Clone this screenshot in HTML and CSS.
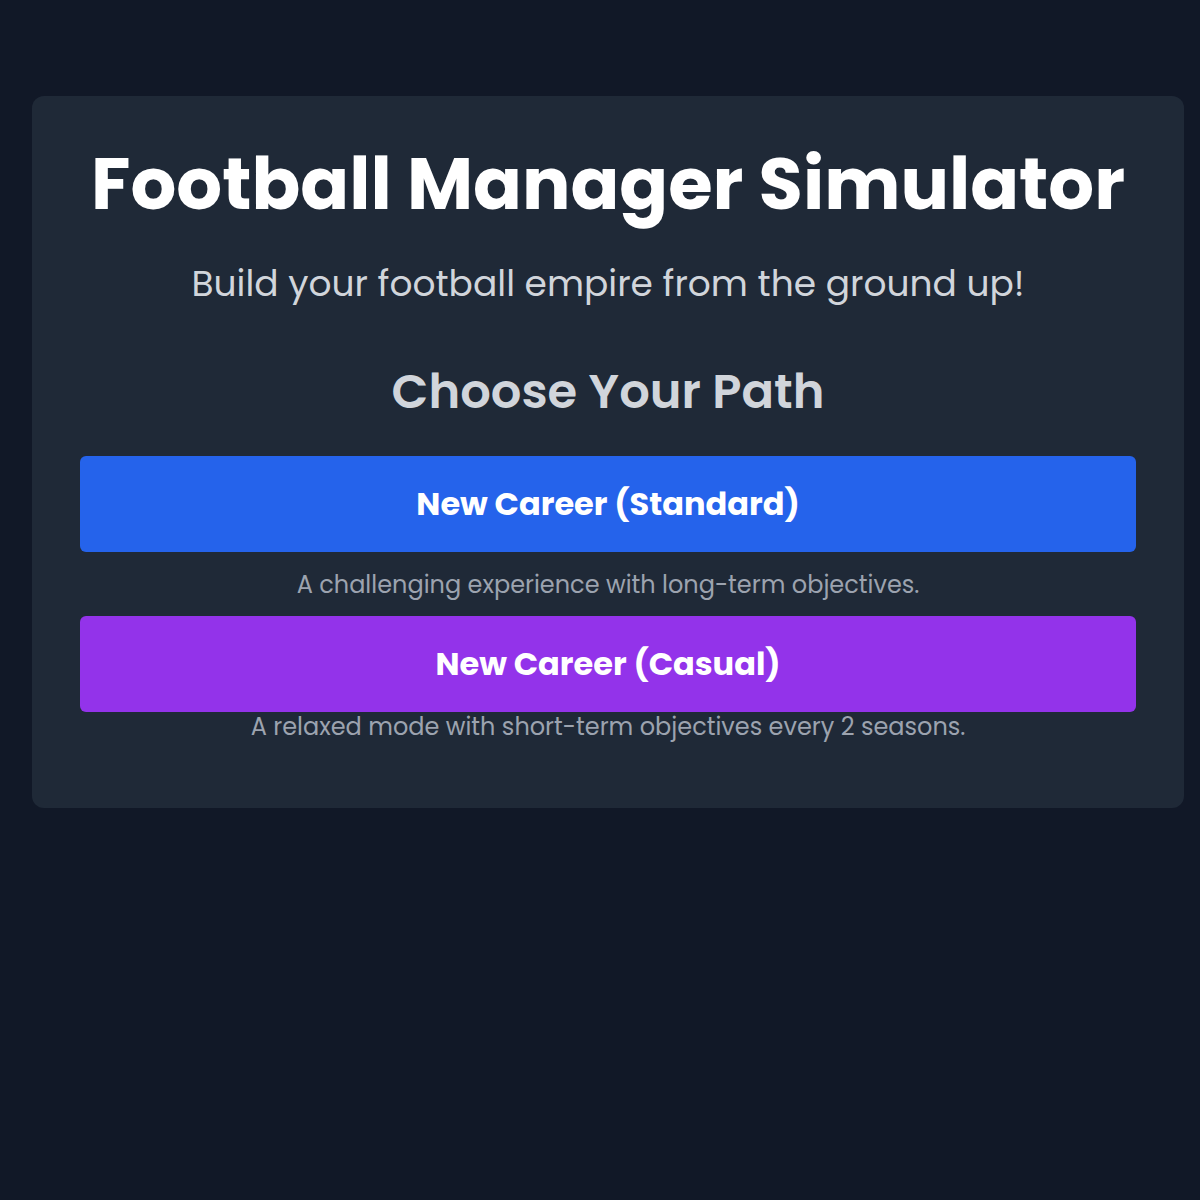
FILE: index.html
```html
<!DOCTYPE html>
<html>
	<head>
		<meta charset="UTF-8">
		<title>Football Manager Simulator</title>
		<link rel="stylesheet" href="styles.css">
	</head>
	<body>
		<div class="page">
			<div class="menu">
				<h1 class="title">Football Manager Simulator</h1>
				<p class="tagline">Build your football empire from the ground up!</p>
				<h2 class="path">Choose Your Path</h2>
				<button class="btn btn-standard">New Career (Standard)</button>
				<p class="note note-standard">A challenging experience with long-term objectives.</p>
				<button class="btn btn-casual">New Career (Casual)</button>
				<p class="note note-casual">A relaxed mode with short-term objectives every 2 seasons.</p>
			</div>
		</div>
	</body>
</html>
```

FILE: styles.css
```css
*{
	margin: 0;
	padding: 0;
	box-sizing: border-box;
}
body{
	background: #111827;
	font-family: "Poppins", "Inter", "Noto Sans", sans-serif;
	color: #fff;
}
.page{
	padding: 96px 16px 0 32px;
}
.menu{
	background: #1f2937;
	border-radius: 12px;
	padding: 52px 48px 48px;
	display: flex;
	flex-direction: column;
	align-items: center;
}
.title{
	font-size: 72px;
	font-weight: 700;
	line-height: 1;
	text-align: center;
}
.tagline{
	margin-top: 42px;
	font-size: 36px;
	line-height: 1.2;
	color: #d1d5db;
}
.path{
	margin-top: 58px;
	font-size: 48px;
	font-weight: 600;
	line-height: 1.2;
	color: #d1d5db;
}
.btn{
	width: 100%;
	height: 96px;
	border: none;
	border-radius: 6px;
	font-family: inherit;
	font-size: 32px;
	font-weight: 700;
	color: #fff;
	cursor: pointer;
}
.btn-standard{
	margin-top: 35px;
	background: #2563eb;
}
.btn-casual{
	background: #9333ea;
}
.note{
	font-size: 24px;
	line-height: 1.4;
	color: #9ca3af;
}
.note-standard{
	margin: 16px 0 15px;
}
.note-casual{
	line-height: 30px;
	margin-bottom: 18px;
}
```
